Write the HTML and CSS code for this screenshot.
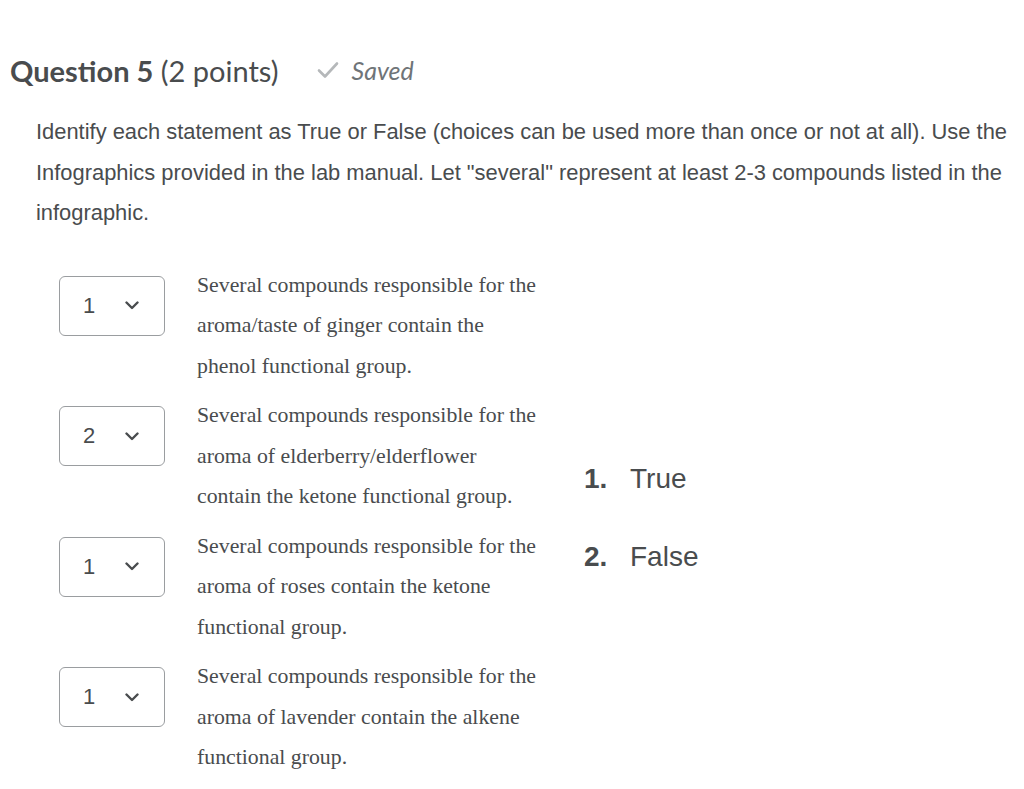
FILE: index.html
```html
<!DOCTYPE html>
<html>
<head>
<meta charset="utf-8">
<link rel="stylesheet" href="styles.css">
</head>
<body>
<div class="page">
  <div class="q-header">
    <h2 class="q-title"><strong>Question 5</strong> (2 points)</h2>
    <span class="saved">
      <svg class="check" width="22" height="18" viewBox="0 0 22 18"><path d="M2 9.5 L8 15.5 L20 2.5" fill="none" stroke="#b5b8ba" stroke-width="2.6" stroke-linecap="round" stroke-linejoin="round"/></svg>
      <span class="saved-text">Saved</span>
    </span>
  </div>
  <p class="prompt">Identify each statement as True or False (choices can be used more than once or not at all). Use the Infographics provided in the lab manual. Let "several" represent at least 2-3 compounds listed in the infographic.</p>
  <div class="matching">
    <div class="items">
      <div class="item">
        <div class="select"><span class="val">1</span><svg class="chev" width="14" height="9" viewBox="0 0 14 9"><path d="M1.5 1.5 L7 7 L12.5 1.5" fill="none" stroke="#494c4e" stroke-width="2.4" stroke-linecap="round" stroke-linejoin="round"/></svg></div>
        <div class="stmt">Several compounds responsible for the aroma/taste of ginger contain the phenol functional group.</div>
      </div>
      <div class="item">
        <div class="select"><span class="val">2</span><svg class="chev" width="14" height="9" viewBox="0 0 14 9"><path d="M1.5 1.5 L7 7 L12.5 1.5" fill="none" stroke="#494c4e" stroke-width="2.4" stroke-linecap="round" stroke-linejoin="round"/></svg></div>
        <div class="stmt">Several compounds responsible for the aroma of elderberry/elderflower contain the ketone functional group.</div>
      </div>
      <div class="item">
        <div class="select"><span class="val">1</span><svg class="chev" width="14" height="9" viewBox="0 0 14 9"><path d="M1.5 1.5 L7 7 L12.5 1.5" fill="none" stroke="#494c4e" stroke-width="2.4" stroke-linecap="round" stroke-linejoin="round"/></svg></div>
        <div class="stmt">Several compounds responsible for the aroma of roses contain the ketone functional group.</div>
      </div>
      <div class="item">
        <div class="select"><span class="val">1</span><svg class="chev" width="14" height="9" viewBox="0 0 14 9"><path d="M1.5 1.5 L7 7 L12.5 1.5" fill="none" stroke="#494c4e" stroke-width="2.4" stroke-linecap="round" stroke-linejoin="round"/></svg></div>
        <div class="stmt">Several compounds responsible for the aroma of lavender contain the alkene functional group.</div>
      </div>
    </div>
    <ol class="choices">
      <li><span class="num">1.</span>True</li>
      <li><span class="num">2.</span>False</li>
    </ol>
  </div>
</div>
</body>
</html>
```
FILE: styles.css
```css
html, body {
  margin: 0;
  padding: 0;
  background: #ffffff;
}
.page {
  color: #494c4e;
  padding-top: 50px;
}
.q-header {
  display: flex;
  align-items: center;
  padding-left: 10px;
  height: 40px;
}
.q-title {
  margin: 0;
  font-family: Lato, "Noto Sans", sans-serif;
  font-size: 29px;
  font-weight: 400;
  color: #494c4e;
}
.q-title strong {
  font-weight: 700;
}
.saved {
  display: flex;
  align-items: center;
  margin-left: 38px;
}
.check {
  display: block;
}
.saved-text {
  margin-left: 13px;
  font-family: Lato, "Noto Sans", sans-serif;
  font-style: italic;
  font-size: 25px;
  color: #6f7478;
}
.prompt {
  margin: 0;
  padding: 22px 8px 0 36px;
  font-family: "Liberation Sans", Arial, sans-serif;
  font-size: 21.9px;
  line-height: 40.5px;
  color: #494c4e;
}
.matching {
  display: flex;
  align-items: center;
  margin-top: 31px;
}
.items {
  display: flex;
  flex-direction: column;
  gap: 9px;
  padding-left: 59px;
}
.item {
  display: flex;
  align-items: flex-start;
}
.select {
  box-sizing: border-box;
  width: 106px;
  height: 60px;
  margin-top: 11px;
  border: 1px solid #9a9da0;
  border-radius: 6px;
  display: flex;
  align-items: center;
  padding-left: 23px;
  font-family: "Liberation Sans", Arial, sans-serif;
  font-size: 22px;
  color: #494c4e;
}
.val {
  width: 42px;
}
.chev {
  display: block;
}
.stmt {
  width: 348px;
  margin-left: 32px;
  font-family: "Liberation Serif", "Times New Roman", serif;
  font-size: 21.8px;
  line-height: 40.5px;
  color: #494c4e;
}
.choices {
  list-style: none;
  margin: 0 0 6px 39px;
  padding: 0;
  font-family: "Liberation Sans", Arial, sans-serif;
  font-size: 28px;
  color: #494c4e;
}
.choices li {
  display: flex;
  height: 39px;
  align-items: center;
}
.choices li + li {
  margin-top: 39px;
}
.num {
  font-weight: 700;
  width: 46px;
}
```
